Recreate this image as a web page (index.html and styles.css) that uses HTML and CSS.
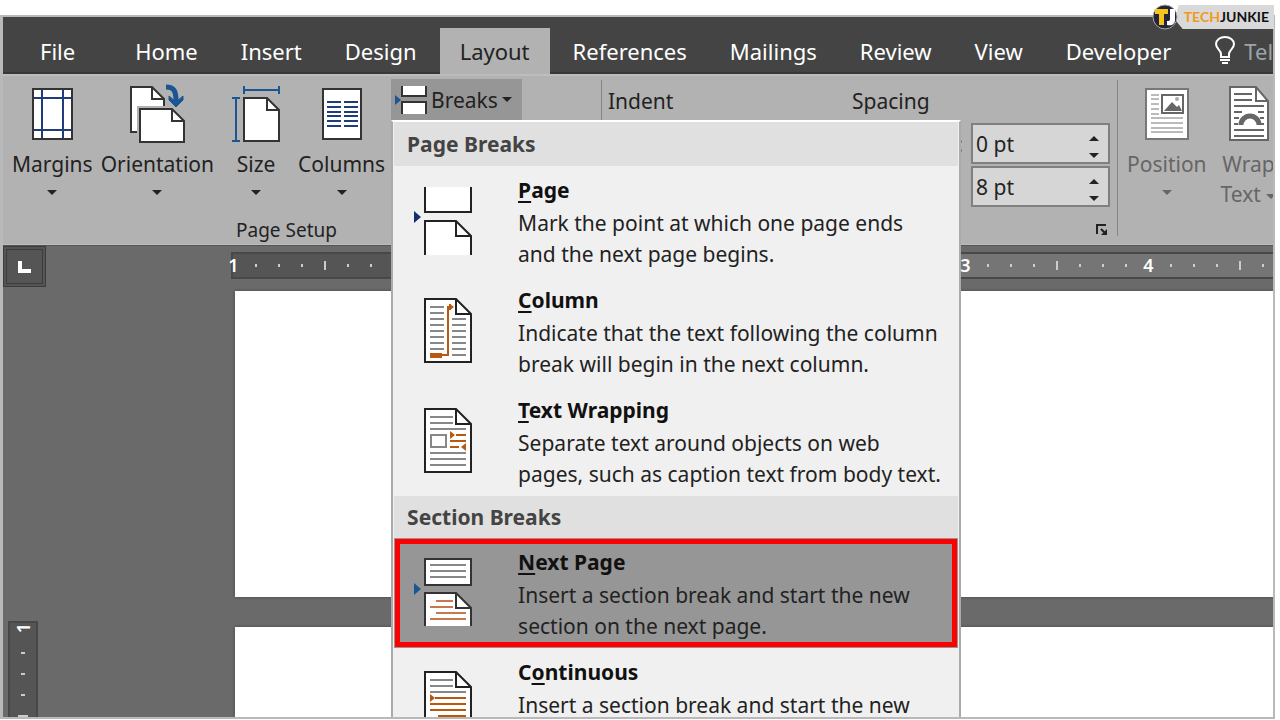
FILE: index.html
```html
<!DOCTYPE html>
<html lang="en">
<head>
    <title>Layout - Breaks</title>
    <meta charset="utf-8">
    <link rel="stylesheet" href="styles.css">
</head>

<body>
    <div class="window">
        <nav class="tabs">
            <button class="tab file" type="button">File</button>
            <button class="tab" type="button">Home</button>
            <button class="tab" type="button">Insert</button>
            <button class="tab" type="button">Design</button>
            <button class="tab active" type="button">Layout</button>
            <button class="tab" type="button">References</button>
            <button class="tab" type="button">Mailings</button>
            <button class="tab" type="button">Review</button>
            <button class="tab" type="button">View</button>
            <button class="tab" type="button">Developer</button>
            <button class="tab tell" type="button">
                <svg width="22" height="30" viewBox="0 0 22 30" fill="none" stroke="#fff" stroke-width="2">
                    <path d="M7 21v-3c0-4-5-5-5-10a9 7 0 0 1 18 0c0 5-5 6-5 10v3z"/>
                    <path d="M6 24h10M8 27h6"/>
                </svg>
                <span>Tell</span>
            </button>
        </nav>

        <div class="ribbon">
            <section class="group setup">
                <div class="row">
                    <button class="big" type="button">
                        <svg width="44" height="60" viewBox="0 0 44 60">
                            <rect x="3" y="5" width="39" height="50" fill="#fff" stroke="#333" stroke-width="2"/>
                            <path d="M12 6v48M33 6v48M4 14h37M4 46h37" stroke="#1f3d7a" stroke-width="2"/>
                        </svg>
                        <span>Margins</span>
                        <i class="caret"></i>
                    </button>
                    <button class="big" type="button">
                        <svg width="58" height="60" viewBox="0 0 58 60" stroke="#333" stroke-width="2">
                            <path d="M3 3h21l12 12v33H3z" fill="#fff"/>
                            <path d="M24 3v12h12" fill="none"/>
                            <path d="M9 22h38v36H9z" fill="#b2b2b2" stroke="none"/>
                            <path d="M12 25h32l12 12v21H12z" fill="#fff"/>
                            <path d="M44 25v12h12" fill="none"/>
                            <path d="M38 3c8 0 10 4 10 14" fill="none" stroke="#1b5592" stroke-width="5"/>
                            <path d="M41 12l7 6 7-6v4l-7 7-7-7z" fill="#1b5592" stroke="#1b5592" stroke-width="1"/>
                        </svg>
                        <span>Orientation</span>
                        <i class="caret"></i>
                    </button>
                    <button class="big size" type="button">
                        <svg width="50" height="60" viewBox="0 0 50 60" stroke-width="2">
                            <path d="M13 14h23l12 12v31H13z" fill="#fff" stroke="#333"/>
                            <path d="M36 14v12h12" fill="none" stroke="#333"/>
                            <path d="M13 6h35M13 2v8M48 2v8M5 14v43M1 14h8M1 57h8" stroke="#1b5592"/>
                        </svg>
                        <span>Size</span>
                        <i class="caret"></i>
                    </button>
                    <button class="big" type="button">
                        <svg width="44" height="60" viewBox="0 0 44 60">
                            <rect x="3" y="5" width="38" height="50" fill="#fff" stroke="#333" stroke-width="2"/>
                            <path d="M7 18h14M7 23h14M7 28h14M7 32h14M7 37h14M7 42h14M24 18h14M24 23h14M24 28h14M24 32h14M24 37h14M24 42h14" stroke="#1f3d7a" stroke-width="2"/>
                        </svg>
                        <span>Columns</span>
                        <i class="caret"></i>
                    </button>

                    <div class="dropdown">
                        <button class="breaks" type="button">
                            <svg width="34" height="34" viewBox="0 0 34 34">
                                <path d="M2 12l6 5-6 5z" fill="#1b5592"/>
                                <path d="M10 3h22v10H10zM10 20h22v11H10z" fill="#fff"/>
                                <path d="M9 3v10h24V3M9 31V19h24v12" fill="none" stroke="#333" stroke-width="2"/>
                            </svg>
                            <span>Breaks</span>
                            <i class="caret"></i>
                        </button>

                        <div class="menu">
                            <h2>Page Breaks</h2>
                            <button class="item" type="button">
                                <svg width="60" height="94" viewBox="0 0 60 94" fill="none" stroke="#222" stroke-width="2">
                                    <path d="M12 13h46v25H12zM12 47h31l15 15v19H12z" fill="#fff" stroke="none"/>
                                    <path d="M12 13v25h46V13M12 81V47h31l15 15v19M43 47v15h15"/>
                                    <path d="M1 37l7 6-7 6z" fill="#12306b" stroke="none"/>
                                </svg>
                                <span class="text">
                                    <b><u>P</u>age</b>
                                    <span>Mark the point at which one page ends<br>and the next page begins.</span>
                                </span>
                            </button>
                            <button class="item" type="button">
                                <svg width="60" height="94" viewBox="0 0 60 94" fill="none" stroke-width="2">
                                    <path d="M12 15h31l15 15v48H12z" fill="#fff" stroke="#222"/>
                                    <path d="M43 15v15h15" stroke="#222"/>
                                    <path d="M17 23h14M17 29h14M17 35h14M17 41h14M17 47h14M17 53h14M17 59h14M17 65h14M39 35h14M39 41h14M39 47h14M39 53h14M39 59h14M39 65h14M39 71h14" stroke="#888"/>
                                    <path d="M29 71h6V23h4M37 20v6" stroke="#b8590f"/>
                                    <path d="M17 69h12v5H17zM37 20l4 3-4 3z" fill="#b8590f"/>
                                </svg>
                                <span class="text">
                                    <b><u>C</u>olumn</b>
                                    <span>Indicate that the text following the column<br>break will begin in the next column.</span>
                                </span>
                            </button>
                            <button class="item" type="button">
                                <svg width="60" height="94" viewBox="0 0 60 94" fill="none" stroke-width="2">
                                    <path d="M12 15h31l15 15v48H12z" fill="#fff" stroke="#222"/>
                                    <path d="M43 15v15h15" stroke="#222"/>
                                    <path d="M17 23h23M17 29h23M17 35h36M17 59h36M17 65h36M17 71h36M18 41h15v12H18z" stroke="#888"/>
                                    <path d="M43 41h10M37 47h16M37 53h9" stroke="#b8590f"/>
                                    <path d="M37 37l5 4-5 4zM53 49l-5 4 5 4z" fill="#b8590f"/>
                                </svg>
                                <span class="text">
                                    <b><u>T</u>ext Wrapping</b>
                                    <span>Separate text around objects on web<br>pages, such as caption text from body text.</span>
                                </span>
                            </button>
                            <h2 class="section">Section Breaks</h2>
                            <button class="item selected" type="button">
                                <svg width="60" height="94" viewBox="0 0 60 94" fill="none" stroke="#333" stroke-width="2">
                                    <path d="M12 13h46v26H12zM12 47h31l15 15v18H12z" fill="#fff" stroke="none"/>
                                    <path d="M12 13v26h46V13zM12 80V47h31l15 15v18M43 47v15h15"/>
                                    <path d="M17 19h36M17 25h36M17 31h36" stroke="#888"/>
                                    <path d="M23 55h17M17 61h23M23 67h30M17 73h36" stroke="#c6794a"/>
                                    <path d="M1 37l7 6-7 6z" fill="#1b5592" stroke="none"/>
                                </svg>
                                <span class="text">
                                    <b><u>N</u>ext Page</b>
                                    <span>Insert a section break and start the new<br>section on the next page.</span>
                                </span>
                            </button>
                            <button class="item" type="button">
                                <svg width="60" height="94" viewBox="0 0 60 94" fill="none" stroke-width="2">
                                    <path d="M12 16h31l15 15v48H12z" fill="#fff" stroke="#222"/>
                                    <path d="M43 16v15h15" stroke="#222"/>
                                    <path d="M17 24h23M17 30h23M17 36h36" stroke="#888"/>
                                    <path d="M22 42h31M17 48h36M17 54h36M25 60h28" stroke="#b8590f"/>
                                    <path d="M17 38l5 4-5 4z" fill="#b8590f"/>
                                </svg>
                                <span class="text">
                                    <b>C<u>o</u>ntinuous</b>
                                    <span>Insert a section break and start the new</span>
                                </span>
                            </button>
                        </div>
                    </div>
                </div>
                <div class="caption">Page Setup</div>
            </section>

            <section class="group paragraph">
                <div class="heads">
                    <span>Indent</span>
                    <span>Spacing</span>
                </div>
                <div class="fields">
                    <label for="before">Before:</label>
                    <div class="spin">
                        <input type="text" id="before" value="0 pt">
                        <div class="arrows">
                            <button type="button" aria-label="Increase before"><i class="caret up"></i></button>
                            <button type="button" aria-label="Decrease before"><i class="caret"></i></button>
                        </div>
                    </div>
                    <label for="after">After:</label>
                    <div class="spin">
                        <input type="text" id="after" value="8 pt">
                        <div class="arrows">
                            <button type="button" aria-label="Increase after"><i class="caret up"></i></button>
                            <button type="button" aria-label="Decrease after"><i class="caret"></i></button>
                        </div>
                    </div>
                </div>
                <div class="caption">
                    <button class="launcher" type="button" aria-label="Paragraph settings">
                        <svg width="12" height="12" viewBox="0 0 12 12" fill="none" stroke="#222" stroke-width="2">
                            <path d="M1 10V1h9M5 5l5 5"/>
                            <path d="M11 5v6H5z" fill="#222" stroke="none"/>
                        </svg>
                    </button>
                </div>
            </section>

            <section class="group arrange">
                <div class="row">
                    <button class="big" type="button">
                        <svg width="46" height="60" viewBox="0 0 46 60" fill="none" stroke="#777">
                            <rect x="2" y="5" width="42" height="50" fill="#fff" stroke-width="2"/>
                            <path d="M7 11h8M7 15h8M7 20h8M7 25h8M7 30h8M7 34h32M7 39h32M7 44h32M7 48h32" stroke-width="1"/>
                            <rect x="18" y="11" width="21" height="18" stroke="#666" stroke-width="2"/>
                            <path d="M20 27l8-9 5 5 2-2 3 6z" fill="#666" stroke="none"/>
                            <circle cx="33" cy="15" r="2" fill="#aaa" stroke="none"/>
                        </svg>
                        <span>Position</span>
                        <i class="caret"></i>
                    </button>
                    <button class="big" type="button">
                        <svg width="44" height="60" viewBox="0 0 44 60" fill="none" stroke="#666" stroke-width="2">
                            <path d="M4 3h26l12 14v39H4z" fill="#fff"/>
                            <path d="M30 3v14h12"/>
                            <path d="M8 10h18M8 16h18M8 22h30M8 28h8M32 28h6M8 34h5M34 34h4M8 40h4M35 40h3M8 46h30M8 52h30"/>
                            <path d="M15 41a9 9 0 0 1 18 0" stroke-width="5"/>
                        </svg>
                        <span>Wrap</span>
                        <span>Text <i class="caret"></i></span>
                    </button>
                </div>
            </section>
        </div>

        <main class="workspace">
            <aside class="side">
                <button class="tabstop" type="button" aria-label="Left tab">
                    <svg width="14" height="14" viewBox="0 0 14 14"><path d="M2 1v10h11" fill="none" stroke="#fff" stroke-width="4"/></svg>
                </button>
                <div class="vruler">
                    <span class="num">1</span>
                    <i></i><i></i><i></i><i class="half"></i>
                </div>
            </aside>
            <div class="canvas">
                <div class="ruler">
                    <div class="inch"><span>1</span><i></i><i></i><i></i><i class="half"></i><i></i><i></i><i></i></div>
                    <div class="inch"><span></span><i></i><i></i><i></i><i class="half"></i><i></i><i></i><i></i></div>
                    <div class="inch"><span></span><i></i><i></i><i></i><i class="half"></i><i></i><i></i><i></i></div>
                    <div class="inch"><span></span><i></i><i></i><i></i><i class="half"></i><i></i><i></i><i></i></div>
                    <div class="inch"><span>3</span><i></i><i></i><i></i><i class="half"></i><i></i><i></i><i></i></div>
                    <div class="inch"><span>4</span><i></i><i></i><i></i><i class="half"></i><i></i><i></i><i></i></div>
                </div>
                <div class="page first"></div>
                <div class="page"></div>
            </div>
        </main>
    </div>

    <div class="brand">
        <svg width="28" height="26" viewBox="0 0 28 26">
            <circle cx="14" cy="13" r="12" fill="#23263a" stroke="#aaa" stroke-width="1"/>
            <path d="M4 5h13v5h-4v11H8V10H4z" fill="#f5c518"/>
            <path d="M19 5h5v11c0 4-3 6-8 5v-4c2 0 3 0 3-2z" fill="#fff"/>
        </svg>
        <span class="name"><em>TECH</em>JUNKIE</span>
    </div>
</body>
</html>
```
FILE: styles.css
```css
* {
    box-sizing: border-box;
}

body {
    margin: 0;
    height: 100vh;
    padding: 15px 5px 1px 0;
    background: #fff;
    overflow: hidden;
    font-family: "Noto Sans", "Open Sans", sans-serif;
    font-size: 21px;
    color: #222;
}

button,
input {
    font: inherit;
    color: inherit;
    border: 0;
    margin: 0;
    padding: 0;
    background: none;
}

.window {
    height: 100%;
    display: flex;
    flex-direction: column;
    border: 2px solid #b9b9b9;
    border-left-width: 3px;
    overflow: hidden;
}

.caret {
    display: inline-block;
    border: 5px solid transparent;
    border-top-color: currentColor;
    border-bottom: 0;
}

.caret.up {
    border-top: 0;
    border-bottom: 5px solid currentColor;
}

/* tabs */
.tabs {
    display: flex;
    gap: 3px;
    flex: none;
    height: 57px;
    padding-top: 11px;
    background: #444;
    border-bottom: 2px solid #383838;
    color: #fff;
    font-size: 22px;
}

.tab {
    flex: none;
    height: 46px;
    padding: 0 20px;
    white-space: nowrap;
}

.tab.file {
    padding: 0 37px;
}

.tab.active {
    background: #b2b2b2;
    color: #222;
}

.tab.tell {
    display: flex;
    align-items: center;
    gap: 8px;
    color: #9ba3ad;
}

/* ribbon */
.ribbon {
    display: flex;
    flex: none;
    height: 171px;
    background: #b2b2b2;
    border-top: 2px solid #bdbdbd;
    border-bottom: 1px solid #bdbdbd;
}

.group {
    display: flex;
    flex-direction: column;
    flex: none;
    position: relative;
}

.group + .group::before {
    content: "";
    position: absolute;
    left: 0;
    top: 4px;
    bottom: 8px;
    border-left: 1px solid #858585;
}

.setup {
    width: 598px;
    padding-left: 5px;
}

.row {
    display: flex;
    align-items: flex-start;
}

.big {
    display: flex;
    flex-direction: column;
    align-items: center;
    padding: 8px 4px 0;
    line-height: 30px;
}

.big svg {
    margin-bottom: 5px;
}

.big > .caret {
    margin-top: 11px;
}

.big .caret {
    vertical-align: middle;
}

.size {
    width: 76px;
}

.caption {
    margin-top: auto;
    padding-right: 36px;
    font-size: 19px;
    line-height: 28px;
    text-align: center;
}

.dropdown {
    position: relative;
    margin: 3px 0 0 2px;
}

.breaks {
    display: flex;
    align-items: center;
    gap: 4px;
    height: 41px;
    padding: 0 10px 0 2px;
    background: #969696;
}

/* breaks menu */
.menu {
    position: absolute;
    left: 0;
    top: 41px;
    z-index: 2;
    width: 570px;
    padding: 0 1px;
    background: #f0f0f0;
    border: 2px solid #aaa;
    border-top-color: #fff;
}

.menu h2 {
    margin: 0;
    padding-left: 13px;
    background: #e0e0e0;
    color: #444;
    font-size: 21px;
    line-height: 44px;
}

.menu .section {
    line-height: 42px;
}

.item {
    display: flex;
    gap: 45px;
    width: 100%;
    height: 110px;
    padding: 8px 0 8px 19px;
    text-align: left;
    white-space: nowrap;
}

.item b {
    display: block;
    margin-bottom: 2px;
    color: #111;
    line-height: 32px;
}

.item span span {
    line-height: 31px;
}

.item u {
    text-underline-offset: 3px;
}

.selected {
    background: #969696;
    outline: 5px solid #f00;
    outline-offset: -6px;
}

/* paragraph */
.paragraph {
    width: 516px;
    padding: 0 7px;
}

.heads {
    display: grid;
    grid-template-columns: 244px 1fr;
    padding-top: 10px;
    line-height: 30px;
}

.fields {
    display: grid;
    grid-template-columns: auto 139px;
    justify-content: end;
    align-items: center;
    gap: 2px 8px;
    padding-top: 7px;
}

.spin {
    display: flex;
    height: 41px;
    background: #d6d6d6;
    border: 2px solid #808080;
}

.spin input {
    flex: 1;
    min-width: 0;
    padding-left: 3px;
}

.arrows {
    display: flex;
    flex-direction: column;
    justify-content: space-evenly;
    width: 28px;
    line-height: 8px;
}

.paragraph .caption {
    display: flex;
    justify-content: flex-end;
    align-items: center;
    height: 28px;
    padding-right: 2px;
}

.launcher {
    display: flex;
}

.arrange {
    padding-left: 6px;
    color: #666;
}

.arrange .row {
    gap: 6px;
}

/* document area */
.workspace {
    display: flex;
    flex: 1;
    min-height: 0;
    background: #6a6a6a;
    border-top: 1px solid #555;
}

.side {
    display: flex;
    flex-direction: column;
    justify-content: space-between;
    flex: none;
    width: 228px;
}

.tabstop {
    display: flex;
    align-items: center;
    justify-content: center;
    width: 43px;
    height: 41px;
    background: #555;
    border: 4px double #3c3c3c;
}

.vruler {
    display: flex;
    flex-direction: column;
    align-items: center;
    justify-content: space-between;
    width: 30px;
    height: 96px;
    margin-left: 5px;
    background: #555;
    border: 2px solid #484848;
    border-bottom: 0;
    color: #fff;
}

.num {
    writing-mode: vertical-rl;
    transform: rotate(180deg);
    font-size: 18px;
    font-weight: 600;
    line-height: 18px;
}

.vruler i {
    width: 4px;
    height: 2px;
    background: #ccc;
}

.vruler .half {
    width: 10px;
}

.canvas {
    display: flex;
    flex-direction: column;
    flex: 1;
    min-width: 0;
}

.ruler {
    display: flex;
    flex: none;
    height: 27px;
    margin: 6px 0 12px;
    background: linear-gradient(to right, #555 190px, #757575 190px);
    border: 2px solid #484848;
    border-right: 0;
    color: #fff;
}

.inch {
    display: grid;
    grid-template-columns: repeat(8, 1fr);
    align-items: center;
    justify-items: center;
    flex: none;
    width: 183px;
    font-size: 18px;
    font-weight: 600;
    line-height: 23px;
}

.inch:first-child {
    margin-left: -11px;
}

.inch i {
    width: 2px;
    height: 3px;
    background: #ccc;
}

.inch .half {
    height: 9px;
}

.page {
    flex: 1;
    margin-left: 4px;
    background: #fff;
    box-shadow: 0 0 3px #444;
}

.page.first {
    flex: none;
    height: 306px;
    margin-bottom: 30px;
}

/* site badge over the corner */
.brand {
    position: absolute;
    top: 4px;
    right: 6px;
    z-index: 3;
    display: flex;
    align-items: center;
}

.brand svg {
    z-index: 1;
}

.brand .name {
    margin-left: -4px;
    padding: 0 5px 0 9px;
    background: #d9d9d9;
    clip-path: polygon(4px 0, 100% 0, 100% 100%, 8px 100%, 0 60%);
    color: #111;
    font: bold 14px/24px Lato, sans-serif;
}

.brand em {
    color: #f09a1a;
    font-style: normal;
}
```
